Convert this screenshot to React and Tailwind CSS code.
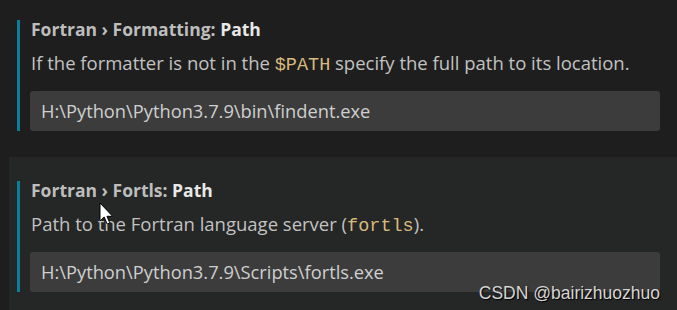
import React from "react";

const font = { fontFamily: '"Open Sans", "Noto Sans", sans-serif' };

const Code = ({ children }) => (
  <code className="font-['Liberation_Mono',monospace] text-[#d7ba7d]">{children}</code>
);

const SettingItem = ({ category, label, children, value }) => (
  <div className="flex">
    <div className="w-[3px] bg-[#0c7d9d] shrink-0" />
    <div className="flex-1 pl-[10px] pr-[17px]">
      <div className="pl-px text-[17.5px] leading-[18px] font-bold text-[#bdbdbd]">
        {category} <span className="text-[#e8e8e8]">{label}</span>
      </div>
      <div className="pl-px mt-[13px] text-[18.5px] leading-[24px] text-[#c2c2c2]">{children}</div>
      <div className="mt-[13px] h-[40px] rounded-[3px] bg-[#3c3c3c] px-[11px] flex items-center text-[18.3px] text-[#cfcfcf]">
        {value}
      </div>
    </div>
  </div>
);

const Cursor = () => (
  <svg
    className="absolute left-[99px] top-[202px]"
    width="15"
    height="24"
    viewBox="0 0 15 24"
  >
    <path
      d="M1 1 L1 19 L5.2 15 L8.2 22 L10.8 20.9 L7.9 14.3 L13.6 14.3 Z"
      fill="#ffffff"
      stroke="#000000"
      strokeWidth="1"
      strokeLinejoin="round"
    />
  </svg>
);

export default function App() {
  return (
    <div className="relative w-[677px] h-[310px] overflow-hidden bg-[#1e1e1e]" style={font}>
      <div className="pt-[20px] pl-[17px]">
        <SettingItem
          category="Fortran › Formatting:"
          label="Path"
          value="H:\Python\Python3.7.9\bin\findent.exe"
        >
          If the formatter is not in the <Code>$PATH</Code> specify the full path to its location.
        </SettingItem>
      </div>

      <div className="mt-[26px] ml-[9px] h-[160px] bg-[#252626] pt-[24px] pl-[8px]">
        <SettingItem
          category="Fortran › Fortls:"
          label="Path"
          value="H:\Python\Python3.7.9\Scripts\fortls.exe"
        >
          Path to the Fortran language server (<Code>fortls</Code>).
        </SettingItem>
      </div>

      <Cursor />

      <div className="absolute right-[17px] bottom-[7px] text-[17.5px] leading-[20px] text-[#d4d4d4] font-['Liberation_Sans',sans-serif] [text-shadow:1px_1px_1px_#000]">
        CSDN @bairizhuozhuo
      </div>
    </div>
  );
}
